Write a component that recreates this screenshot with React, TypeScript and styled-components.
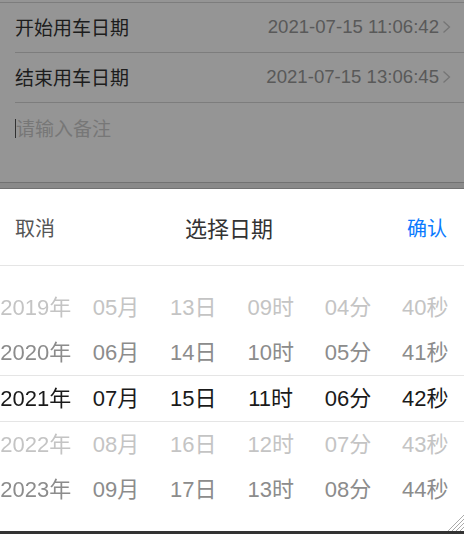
import React from "react";
import styled, { createGlobalStyle } from "styled-components";

const GlobalStyle = createGlobalStyle`
  html, body {
    margin: 0;
    padding: 0;
    background: #fff;
    font-family: "Liberation Sans", "Noto Sans CJK SC", sans-serif;
  }
  * { box-sizing: border-box; }
`;

const Page = styled.div`
  padding-top: 2px;
  height: 534px;
  overflow: hidden;
`;

const List = styled.div`
  border-top: 1px solid #d6d6d6;
`;

const Row = styled.div`
  height: 50px;
  padding-left: 15px;
  display: flex;
`;

const RowInner = styled.div`
  flex: 1;
  display: flex;
  align-items: center;
  justify-content: space-between;
  padding: 0 13px 2px 0;
  border-bottom: 1px solid #d6d6d6;
`;

const Label = styled.span`
  font-size: 19px;
  color: #333;
`;

const Value = styled.span`
  display: flex;
  align-items: center;
  gap: 3px;
  font-size: 18.6px;
  color: #999;
`;

const Remark = styled.div`
  height: 80px;
  padding: 11px 15px 0;
  border-bottom: 1px solid #c4c4c4;
  display: flex;
  align-items: flex-start;
`;

const Caret = styled.span`
  width: 1px;
  height: 19px;
  margin-top: 5px;
  background: #555;
`;

const Placeholder = styled.span`
  font-size: 19px;
  color: #ccc;
`;

const Gap = styled.div`
  height: 5px;
  background: #ececec;
  border-bottom: 1px solid #c4c4c4;
  box-sizing: content-box;
`;

const Overlay = styled.div`
  position: fixed;
  inset: 0;
  background: rgba(0, 0, 0, 0.415);
  display: flex;
  flex-direction: column;
  justify-content: flex-end;
`;

const Sheet = styled.div`
  position: relative;
  height: 342px;
  background: #fff;
  display: flex;
  flex-direction: column;
`;

const Toolbar = styled.div`
  height: 77px;
  flex-shrink: 0;
  display: grid;
  grid-template-columns: 1fr auto 1fr;
  align-items: center;
  padding: 0 17px 0 15px;
  border-bottom: 1px solid #e5e5e5;
`;

const ToolButton = styled.span<{ $primary?: boolean }>`
  font-size: 20px;
  color: ${(p) => (p.$primary ? "#0a7aff" : "#555")};
  justify-self: ${(p) => (p.$primary ? "end" : "start")};
`;

const Title = styled.span`
  font-size: 22px;
  color: #333;
  transform: translateX(-2px);
`;

const Wheel = styled.div`
  flex: 1;
  display: flex;
  flex-direction: column;
  justify-content: center;
`;

type Tone = "faint" | "mid" | "active";

const toneColor: Record<Tone, string> = {
  faint: "#c4c4c4",
  mid: "#8c8c8c",
  active: "#1a1a1a",
};

const WheelRow = styled.div<{ $tone: Tone }>`
  height: 45px;
  display: grid;
  grid-template-columns: repeat(6, 1fr);
  align-items: center;
  font-size: 22px;
  color: ${(p) => toneColor[p.$tone]};
  ${(p) =>
    p.$tone === "active"
      ? "border-top: 1px solid #e5e5e5; border-bottom: 1px solid #e5e5e5; box-sizing: content-box;"
      : ""}
`;

const Cell = styled.span<{ $first?: boolean }>`
  display: block;
  line-height: 1;
  text-align: center;
  white-space: nowrap;
  ${(p) => (p.$first ? "transform: translateX(-3px);" : "")}
`;

const Grip = styled.svg`
  position: absolute;
  right: 0;
  bottom: 0;
`;

const BottomBar = styled.div`
  height: 3px;
  background: #333;
`;

const Chevron = () => (
  <svg width="9" height="14" viewBox="0 0 9 14">
    <polyline points="1.5,1.5 7.5,7 1.5,12.5" fill="none" stroke="#c8c8c8" strokeWidth="1.3" />
  </svg>
);

const rows: { tone: Tone; cells: string[] }[] = [
  { tone: "faint", cells: ["2019年", "05月", "13日", "09时", "04分", "40秒"] },
  { tone: "mid", cells: ["2020年", "06月", "14日", "10时", "05分", "41秒"] },
  { tone: "active", cells: ["2021年", "07月", "15日", "11时", "06分", "42秒"] },
  { tone: "faint", cells: ["2022年", "08月", "16日", "12时", "07分", "43秒"] },
  { tone: "mid", cells: ["2023年", "09月", "17日", "13时", "08分", "44秒"] },
];

export default function App() {
  return (
    <>
      <GlobalStyle />
      <Page>
        <List>
          <Row>
            <RowInner>
              <Label>开始用车日期</Label>
              <Value>
                2021-07-15 11:06:42
                <Chevron />
              </Value>
            </RowInner>
          </Row>
          <Row>
            <RowInner>
              <Label>结束用车日期</Label>
              <Value>
                2021-07-15 13:06:45
                <Chevron />
              </Value>
            </RowInner>
          </Row>
          <Remark>
            <Caret />
            <Placeholder>请输入备注</Placeholder>
          </Remark>
          <Gap />
        </List>
      </Page>
      <Overlay>
        <Sheet>
          <Toolbar>
            <ToolButton>取消</ToolButton>
            <Title>选择日期</Title>
            <ToolButton $primary>确认</ToolButton>
          </Toolbar>
          <Wheel>
            {rows.map((r, i) => (
              <WheelRow key={i} $tone={r.tone}>
                {r.cells.map((c, j) => (
                  <Cell key={j} $first={j === 0}>
                    {c}
                  </Cell>
                ))}
              </WheelRow>
            ))}
          </Wheel>
          <Grip width="18" height="16" viewBox="0 0 18 16">
            <line x1="2" y1="16" x2="18" y2="0" stroke="#aaa" strokeWidth="1" />
            <line x1="6" y1="16" x2="18" y2="4" stroke="#aaa" strokeWidth="1" />
            <line x1="10" y1="16" x2="18" y2="8" stroke="#aaa" strokeWidth="1" />
            <line x1="14" y1="16" x2="18" y2="12" stroke="#aaa" strokeWidth="1" />
          </Grip>
        </Sheet>
        <BottomBar />
      </Overlay>
    </>
  );
}
